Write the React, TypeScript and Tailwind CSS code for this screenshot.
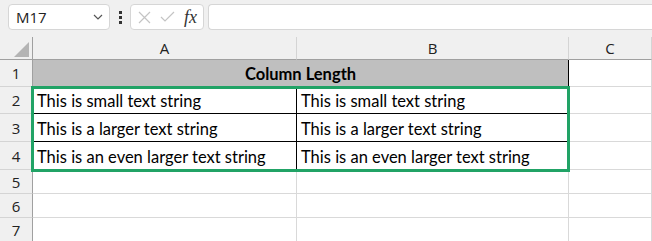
import React from "react";

const rows = [
  "This is small text string",
  "This is a larger text string",
  "This is an even larger text string",
];

export default function App() {
  return (
    <div className="w-[652px] h-[241px] overflow-hidden bg-white">
      {/* formula bar */}
      <div className="h-[37px] bg-[#f0f0f0] flex items-start pt-[4px] pl-[8px] font-['Open_Sans',sans-serif]">
        <div className="w-[102px] h-[26px] bg-white border border-[#d6d6d6] rounded-[4px] flex items-center justify-between pl-[7px] pr-[6px]">
          <span className="text-[15px] text-[#222]">M17</span>
          <svg width="10" height="6" viewBox="0 0 10 6">
            <path d="M1 1 L5 5 L9 1" fill="none" stroke="#555" strokeWidth="1.2" />
          </svg>
        </div>
        <div className="w-[20px] h-[26px] flex flex-col items-center justify-center gap-[2px]">
          <div className="w-[3px] h-[3px] bg-[#333]" />
          <div className="w-[3px] h-[3px] bg-[#333]" />
          <div className="w-[3px] h-[3px] bg-[#333]" />
        </div>
        <div className="w-[74px] h-[26px] bg-white border border-[#d6d6d6] rounded-[4px] flex items-center pl-[7px] gap-[9px]">
          <svg width="13" height="13" viewBox="0 0 13 13">
            <path d="M1 1 L12 12 M12 1 L1 12" stroke="#c4c4c4" strokeWidth="1.2" />
          </svg>
          <svg width="15" height="12" viewBox="0 0 15 12">
            <path d="M1 6 L5 10 L14 1" fill="none" stroke="#c4c4c4" strokeWidth="1.2" />
          </svg>
          <span className="font-['Liberation_Serif',serif] italic text-[18px] text-[#333] leading-none">fx</span>
        </div>
        <div className="ml-[4px] flex-1 h-[26px] bg-white border border-[#d6d6d6] rounded-l-[4px] border-r-0" />
      </div>

      {/* sheet grid */}
      <div className="relative grid grid-cols-[33px_264px_272px_1fr] grid-rows-[23px_27px_27px_28px_28px_24px_24px_24px] font-['Lato',sans-serif] text-[16.5px] leading-[20px] text-black">
        {/* header row */}
        <div className="bg-[#f0f0f0] border-r border-b border-[#a0a0a0] flex items-end justify-end pr-[3px] pb-[2px]">
          <svg width="15" height="15" viewBox="0 0 15 15">
            <polygon points="15,0 15,15 0,15" fill="#b4b4b4" />
          </svg>
        </div>
        {["A", "B", "C"].map((c) => (
          <div
            key={c}
            className="bg-[#f0f0f0] border-b border-[#a0a0a0] border-r border-r-[#d4d4d4] flex items-center justify-center font-['Open_Sans',sans-serif] text-[15px] text-[#222]"
          >
            {c}
          </div>
        ))}

        {/* row 1 */}
        <div className="bg-[#f0f0f0] border-r border-[#a0a0a0] border-b border-b-[#d4d4d4] flex items-center justify-center font-['Open_Sans',sans-serif] text-[15px] text-[#222]">
          1
        </div>
        <div className="col-span-2 bg-[#bfbfbf] border-r border-black flex items-end justify-center pb-[3px] font-bold">
          Column Length
        </div>
        <div className="border-r border-b border-[#d9d9d9]" />

        {rows.map((t, i) => (
          <React.Fragment key={i}>
            <div className="bg-[#f0f0f0] border-r border-[#a0a0a0] border-b border-b-[#d4d4d4] flex items-center justify-center font-['Open_Sans',sans-serif] text-[15px] text-[#222]">
              {i + 2}
            </div>
            <div className="border-r border-b border-black flex items-end pl-[4px] pb-[2px]">{t}</div>
            <div className="border-r border-b border-black flex items-end pl-[4px] pb-[2px]">{t}</div>
            <div className="border-r border-b border-[#d9d9d9]" />
          </React.Fragment>
        ))}

        {[5, 6, 7].map((n) => (
          <React.Fragment key={n}>
            <div className="bg-[#f0f0f0] border-r border-[#a0a0a0] border-b border-b-[#d4d4d4] flex items-center justify-center font-['Open_Sans',sans-serif] text-[15px] text-[#222]">
              {n}
            </div>
            <div className="border-r border-b border-[#d9d9d9]" />
            <div className="border-r border-b border-[#d9d9d9]" />
            <div className="border-r border-b border-[#d9d9d9]" />
          </React.Fragment>
        ))}

        {/* selection outline */}
        <div className="absolute left-[31px] top-[49px] w-[539px] h-[86px] border-[3px] border-[#21a366] pointer-events-none" />
      </div>
    </div>
  );
}
